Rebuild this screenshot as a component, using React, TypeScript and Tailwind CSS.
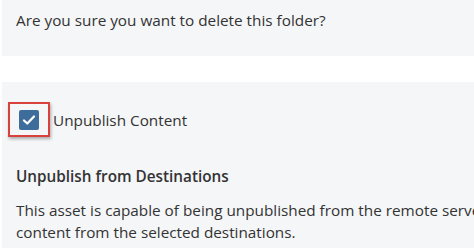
export default function App() {
  return (
    <div
      className="w-[474px] h-[251px] bg-white overflow-hidden text-[#333333]"
      style={{ fontFamily: '"Open Sans", sans-serif' }}
    >
      <div className="ml-[2px] h-[56px] bg-[#f5f6f8] pl-[14px] pt-[9px] text-[15.3px] leading-[22px] whitespace-nowrap">
        Are you sure you want to delete this folder?
      </div>
      <div className="ml-[2px] mt-[26px] h-[166px] bg-[#f5f6f8] pt-[20px] whitespace-nowrap">
        <div className="flex items-center">
          <div className="ml-[6px] flex h-[35px] w-[42px] items-center justify-center border-2 border-[#d9413d] shadow-[1px_2px_3px_rgba(0,0,0,0.3)]">
            <div className="flex h-[20px] w-[20px] items-center justify-center rounded-[2px] bg-[#3f6d9b]">
              <svg width="14" height="14" viewBox="0 0 14 14" fill="none">
                <path d="M2 7.5 L5.3 10.5 L12 3.5" stroke="white" strokeWidth="2.2" strokeLinecap="round" strokeLinejoin="round" />
              </svg>
            </div>
          </div>
          <span className="ml-[3px] text-[15.3px] leading-[22px]">Unpublish Content</span>
        </div>
        <div className="mt-[28px] pl-[14px] text-[15.3px] font-semibold leading-[22px]">
          Unpublish from Destinations
        </div>
        <div className="mt-[12px] pl-[14px] text-[15.3px] leading-[22px]">
          <div>This asset is capable of being unpublished from the remote servers</div>
          <div>content from the selected destinations.</div>
        </div>
      </div>
    </div>
  );
}
